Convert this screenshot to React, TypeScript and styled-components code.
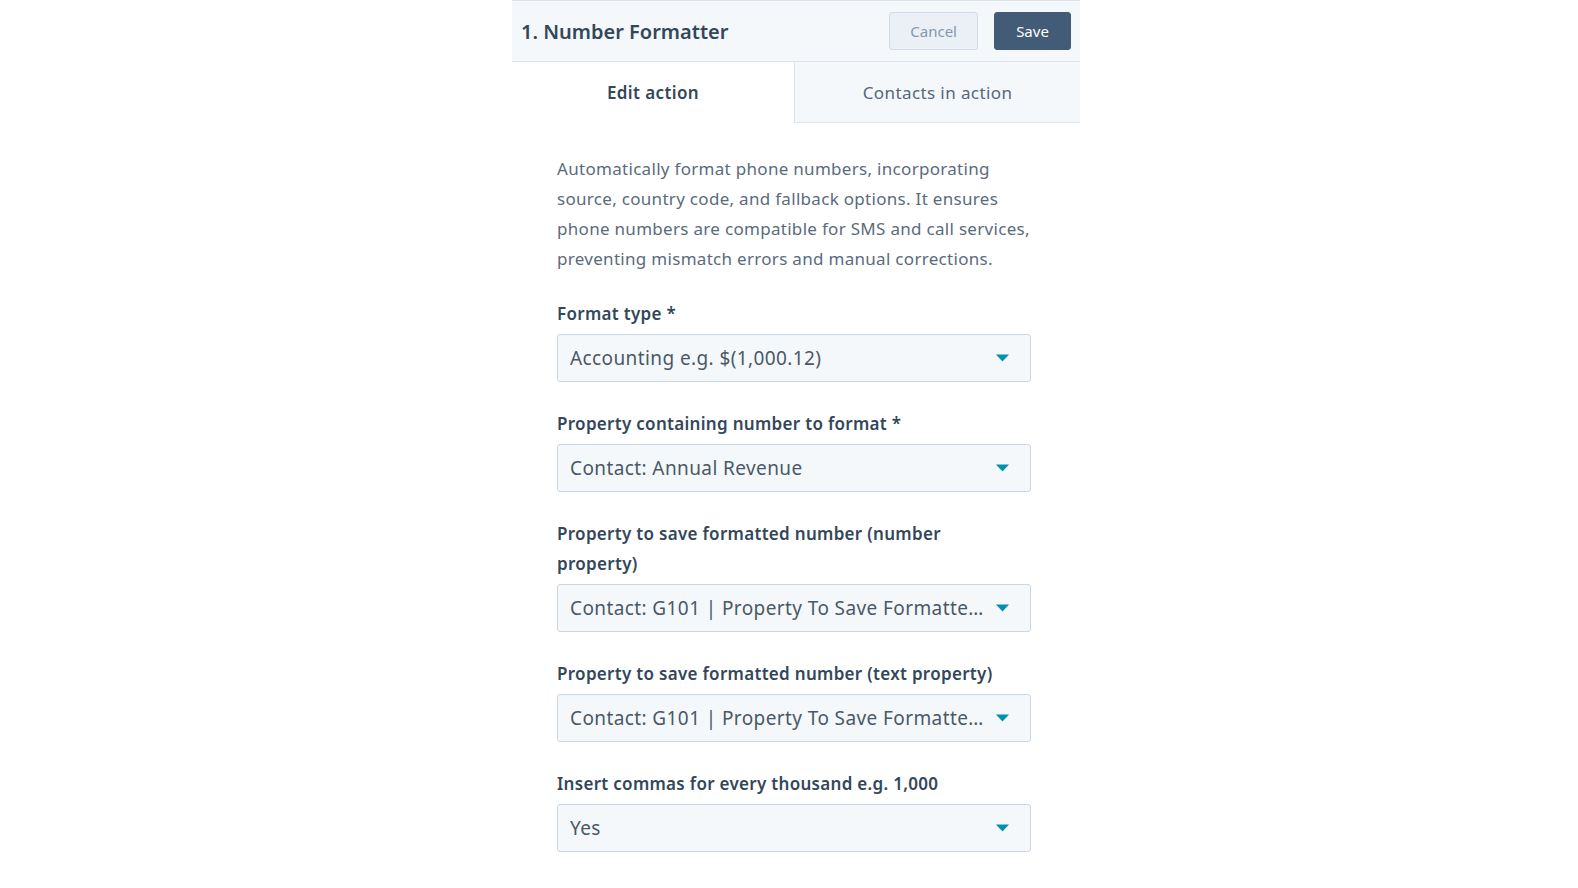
import { createGlobalStyle, styled } from "styled-components";

const GlobalStyle = createGlobalStyle`
  body {
    margin: 0;
    background: #ffffff;
    font-family: "Noto Sans", "Open Sans", sans-serif;
    color: #33475b;
  }
`;

const fields = [
  { label: "Format type *", value: "Accounting e.g. $(1,000.12)" },
  { label: "Property containing number to format *", value: "Contact: Annual Revenue" },
  {
    label: "Property to save formatted number (number property)",
    value: "Contact: G101 | Property To Save Formatted Number",
  },
  {
    label: "Property to save formatted number (text property)",
    value: "Contact: G101 | Property To Save Formatted Text",
  },
  { label: "Insert commas for every thousand e.g. 1,000", value: "Yes" },
];

const Caret = () => (
  <svg width="13" height="8" viewBox="0 0 13 8">
    <path d="M0 0.5 L13 0.5 L6.5 7.5 Z" fill="#0091ae" />
  </svg>
);

const App = () => {
  return (
    <>
      <GlobalStyle />
      <Panel>
        <Header>
          <Title>1. Number Formatter</Title>
          <Actions>
            <Button>Cancel</Button>
            <Button $primary>Save</Button>
          </Actions>
        </Header>
        <Tabs>
          <Tab $active>Edit action</Tab>
          <Tab>Contacts in action</Tab>
        </Tabs>
        <Body>
          <Description>
            Automatically format phone numbers, incorporating source, country code, and fallback
            options. It ensures phone numbers are compatible for SMS and call services, preventing
            mismatch errors and manual corrections.
          </Description>
          {fields.map((f) => (
            <Field key={f.label}>
              <Label>{f.label}</Label>
              <Select>
                <SelectValue>{f.value}</SelectValue>
                <Caret />
              </Select>
            </Field>
          ))}
        </Body>
      </Panel>
    </>
  );
};

export default App;

const Panel = styled.div`
  width: 568px;
  margin-left: 512px;
  background: #ffffff;
`;

const Header = styled.div`
  display: flex;
  align-items: center;
  justify-content: space-between;
  height: 60px;
  padding: 0 9px;
  background: #f5f8fa;
  border-top: 1px solid #dfe3eb;
  border-bottom: 1px solid #dfe3eb;
`;

const Title = styled.h1`
  margin: 0;
  font-size: 20px;
  font-weight: 600;
  color: #33475b;
`;

const Actions = styled.div`
  display: flex;
  gap: 16px;
`;

const Button = styled.button<{ $primary?: boolean }>`
  height: 38px;
  padding: 0 20px;
  border-radius: 3px;
  font-family: inherit;
  font-size: 15px;
  border: 1px solid ${({ $primary }) => ($primary ? "#425b76" : "#d3dce6")};
  background: ${({ $primary }) => ($primary ? "#425b76" : "#eaf0f6")};
  color: ${({ $primary }) => ($primary ? "#ffffff" : "#8498ae")};
  min-width: ${({ $primary }) => ($primary ? "77px" : "88px")};
`;

const Tabs = styled.div`
  display: grid;
  grid-template-columns: 282px 1fr;
  height: 61px;
`;

const Tab = styled.div<{ $active?: boolean }>`
  display: flex;
  align-items: center;
  justify-content: center;
  font-size: 17px;
  letter-spacing: 0.4px;
  font-weight: ${({ $active }) => ($active ? 600 : 400)};
  color: ${({ $active }) => ($active ? "#33475b" : "#55677a")};
  background: ${({ $active }) => ($active ? "#ffffff" : "#f5f8fa")};
  ${({ $active }) =>
    !$active && "border-left: 1px solid #dfe3eb; border-bottom: 1px solid #dfe3eb;"}
`;

const Body = styled.div`
  padding: 31px 49px 40px 45px;
`;

const Description = styled.p`
  margin: 0 0 25px;
  font-size: 17px;
  letter-spacing: 0.3px;
  line-height: 30px;
  color: #5b6b7c;
`;

const Field = styled.div`
  margin-bottom: 27px;
`;

const Label = styled.div`
  max-width: 450px;
  font-size: 17px;
  letter-spacing: 0.3px;
  font-weight: 600;
  line-height: 30px;
  color: #33475b;
  margin-bottom: 5px;
`;

const Select = styled.div`
  display: flex;
  align-items: center;
  gap: 8px;
  height: 46px;
  padding: 0 21px 0 12px;
  background: #f5f8fa;
  border: 1px solid #cbd6e2;
  border-radius: 3px;
`;

const SelectValue = styled.span`
  flex: 1;
  min-width: 0;
  overflow: hidden;
  white-space: nowrap;
  text-overflow: ellipsis;
  font-size: 19px;
  letter-spacing: 0.4px;
  color: #4a5867;
`;
